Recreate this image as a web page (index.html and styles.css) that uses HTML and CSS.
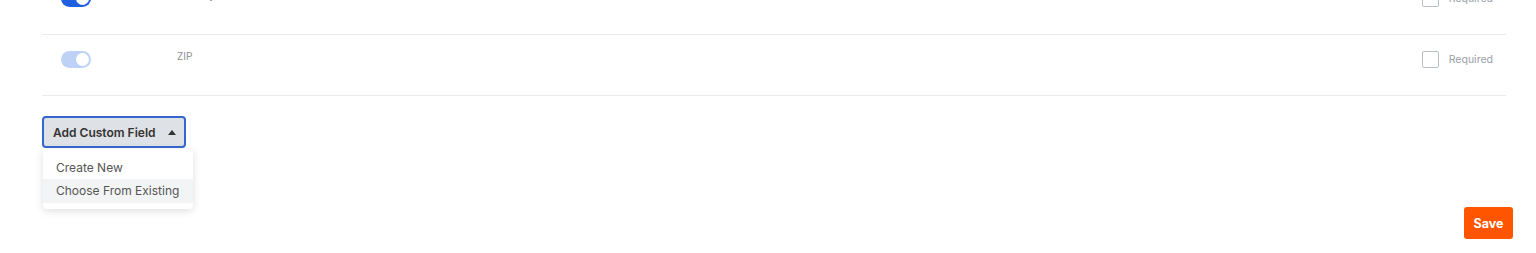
FILE: index.html
```html
<!DOCTYPE html>
<html>
<head>
	<meta charset="UTF-8" />
	<title>Form Fields</title>
	<link rel="stylesheet" href="styles.css">
</head>
<body>
	<div class="page">
		<!--field list-->
		<div class="fields">
			<div class="row">
				<span class="toggle on"><span class="knob"></span></span>
				<span class="label">Country</span>
				<label class="req"><span class="box"></span>Required</label>
			</div>
			<div class="row">
				<span class="toggle dim"><span class="knob"></span></span>
				<span class="label">ZIP</span>
				<label class="req"><span class="box"></span>Required</label>
			</div>
		</div>

		<!--custom field dropdown-->
		<div class="custom">
			<div class="dd">
				<button class="dd-btn">Add Custom Field <span class="caret"></span></button>
				<ul class="menu">
					<li>Create New</li>
					<li class="hover">Choose From Existing</li>
				</ul>
			</div>
		</div>
	</div>

	<div class="actions">
		<button class="save">Save</button>
	</div>
</body>
</html>
```

FILE: styles.css
```css
body {
	margin: 0;
	font-family: Inter, "Noto Sans", sans-serif;
	background: #fff;
	color: #333;
}
.page {
	padding: 0 30px 0 42px;
}
.fields {
	margin-top: -26px;
}
.row {
	display: flex;
	align-items: flex-start;
	padding: 16px 13px 0 19px;
	box-sizing: border-box;
	height: 61px;
	border-bottom: 1px solid #ebebeb;
}
.toggle {
	display: inline-flex;
	justify-content: flex-end;
	align-items: center;
	width: 30px;
	height: 17px;
	border-radius: 9px;
	padding: 2px;
	box-sizing: border-box;
	margin-right: 86px;
	flex-shrink: 0;
}
.toggle.on {
	background: #1f5fe0;
}
.toggle.dim {
	background: #bed2f8;
}
.knob {
	width: 13px;
	height: 13px;
	border-radius: 50%;
	background: #fff;
}
.label {
	font-size: 10px;
	line-height: 10px;
	color: #8c9096;
	flex: 1;
}
.req {
	display: flex;
	align-items: center;
	font-size: 10.5px;
	color: #9aa0a6;
	height: 17px;
}
.box {
	width: 17px;
	height: 17px;
	border: 1.5px solid #b9bec4;
	border-radius: 2px;
	box-sizing: border-box;
	margin-right: 10px;
}
.custom {
	padding-top: 20px;
}
.dd {
	position: relative;
	display: inline-block;
}
.dd-btn {
	font-family: Inter, "Noto Sans", sans-serif;
	font-size: 12px;
	font-weight: 600;
	color: #333;
	background: #dee1e5;
	border: 2px solid #3568cf;
	border-radius: 4px;
	height: 32px;
	width: 144px;
	padding: 0 0 0 9px;
	text-align: left;
	display: flex;
	align-items: center;
}
.caret {
	display: inline-block;
	width: 0;
	height: 0;
	border-left: 4px solid transparent;
	border-right: 4px solid transparent;
	border-bottom: 5px solid #333;
	margin-left: 12px;
}
.menu {
	position: absolute;
	top: 33px;
	left: 1px;
	width: 150px;
	margin: 0;
	padding: 7px 0 6px;
	list-style: none;
	background: #fff;
	border-radius: 4px;
	box-shadow: 0 2px 8px rgba(0, 0, 0, 0.13);
}
.menu li {
	font-size: 12px;
	color: #555;
	height: 23px;
	line-height: 23px;
	padding-left: 13px;
}
.menu li.hover {
	background: #f3f4f6;
	height: 24px;
}
.actions {
	display: flex;
	justify-content: flex-end;
	padding: 59px 23px 0 0;
}
.save {
	font-family: Inter, "Noto Sans", sans-serif;
	font-size: 12.5px;
	font-weight: 700;
	color: #fff;
	background: #ff5500;
	border: none;
	border-radius: 3px;
	width: 49px;
	height: 32px;
}
```
